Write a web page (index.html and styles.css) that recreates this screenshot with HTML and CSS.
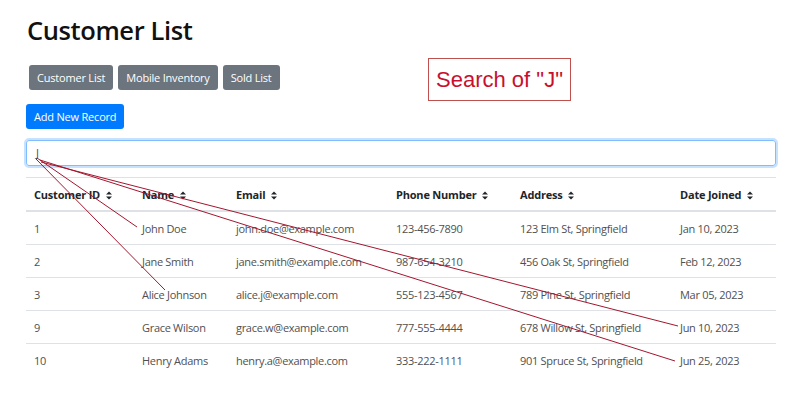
FILE: index.html
```
<!DOCTYPE html>
<html>
<head>
<meta charset="utf-8">
<link rel="stylesheet" href="styles.css">
</head>
<body>
<div class="page">
  <h1 class="title">Customer List</h1>
  <div class="nav">
    <button class="btn btn-gray">Customer List</button>
    <button class="btn btn-gray">Mobile Inventory</button>
    <button class="btn btn-gray">Sold List</button>
  </div>
  <div class="actions">
    <button class="btn btn-blue">Add New Record</button>
  </div>
  <div class="search">J</div>
  <table class="table">
    <thead>
      <tr>
        <th class="c-id">Customer ID <svg class="sort" viewBox="0 0 6 9" width="6" height="9"><path d="M0 3.6L3 0.4L6 3.6Z M0 5.4L3 8.6L6 5.4Z"/></svg></th>
        <th class="c-name">Name <svg class="sort" viewBox="0 0 6 9" width="6" height="9"><path d="M0 3.6L3 0.4L6 3.6Z M0 5.4L3 8.6L6 5.4Z"/></svg></th>
        <th class="c-email">Email <svg class="sort" viewBox="0 0 6 9" width="6" height="9"><path d="M0 3.6L3 0.4L6 3.6Z M0 5.4L3 8.6L6 5.4Z"/></svg></th>
        <th class="c-phone">Phone Number <svg class="sort" viewBox="0 0 6 9" width="6" height="9"><path d="M0 3.6L3 0.4L6 3.6Z M0 5.4L3 8.6L6 5.4Z"/></svg></th>
        <th class="c-addr">Address <svg class="sort" viewBox="0 0 6 9" width="6" height="9"><path d="M0 3.6L3 0.4L6 3.6Z M0 5.4L3 8.6L6 5.4Z"/></svg></th>
        <th class="c-date">Date Joined <svg class="sort" viewBox="0 0 6 9" width="6" height="9"><path d="M0 3.6L3 0.4L6 3.6Z M0 5.4L3 8.6L6 5.4Z"/></svg></th>
      </tr>
    </thead>
    <tbody>
      <tr><td>1</td><td>John Doe</td><td>john.doe@example.com</td><td>123-456-7890</td><td>123 Elm St, Springfield</td><td>Jan 10, 2023</td></tr>
      <tr><td>2</td><td>Jane Smith</td><td>jane.smith@example.com</td><td>987-654-3210</td><td>456 Oak St, Springfield</td><td>Feb 12, 2023</td></tr>
      <tr><td>3</td><td>Alice Johnson</td><td>alice.j@example.com</td><td>555-123-4567</td><td>789 Pine St, Springfield</td><td>Mar 05, 2023</td></tr>
      <tr><td>9</td><td>Grace Wilson</td><td>grace.w@example.com</td><td>777-555-4444</td><td>678 Willow St, Springfield</td><td>Jun 10, 2023</td></tr>
      <tr><td>10</td><td>Henry Adams</td><td>henry.a@example.com</td><td>333-222-1111</td><td>901 Spruce St, Springfield</td><td>Jun 25, 2023</td></tr>
    </tbody>
  </table>
</div>
<div class="note">Search of "J"</div>
<svg class="arrows" width="794" height="397" viewBox="0 0 794 397">
  <g stroke="#a3162e" stroke-width="1" fill="none">
    <line x1="37" y1="158" x2="137" y2="227"/>
    <line x1="36" y1="159" x2="165" y2="290"/>
    <line x1="41" y1="162" x2="678" y2="326"/>
    <line x1="40" y1="160" x2="675" y2="361"/>
  </g>
</svg>
</body>
</html>
```
FILE: styles.css
```
html, body {
  margin: 0;
  padding: 0;
  background: #fff;
}
body {
  font-family: "Open Sans", "Noto Sans", sans-serif;
  color: #212529;
  width: 794px;
  height: 397px;
  overflow: hidden;
  position: relative;
}
.page {
  padding: 14px 18px 0 26px;
}
.title {
  margin: 0 0 0 1px;
  font-size: 25.5px;
  font-weight: 600;
  line-height: 32px;
  letter-spacing: -0.4px;
  color: #111;
}
.nav {
  display: flex;
  gap: 5px;
  margin: 19px 0 0 3px;
}
.btn {
  font-family: inherit;
  border: none;
  border-radius: 3px;
  color: #fff;
  font-size: 11px;
  font-weight: 500;
  letter-spacing: -0.2px;
  height: 25px;
  padding: 0 8px;
  line-height: 25px;
  cursor: pointer;
}
.btn-gray {
  background: #6c757d;
}
.btn-blue {
  background: #007bff;
}
.actions {
  margin-top: 14px;
  display: flex;
}
.search {
  margin-top: 11px;
  height: 24px;
  border: 1px solid #80bdff;
  border-radius: 3px;
  box-shadow: 0 0 0 2px rgba(0, 123, 255, 0.22);
  font-size: 11px;
  line-height: 24px;
  padding-left: 9px;
  color: #495057;
}
.table {
  margin-top: 11px;
  width: 750px;
  border-collapse: collapse;
  font-size: 11px;
  letter-spacing: -0.3px;
  table-layout: fixed;
}
.table th, .table td {
  text-align: left;
  padding: 0 8px;
  border-top: 1px solid #dee2e6;
  white-space: nowrap;
}
.table th {
  height: 32px;
  font-weight: 700;
  letter-spacing: -0.2px;
  border-bottom: 2px solid #dee2e6;
  color: #212529;
}
.table td {
  height: 32px;
  color: #505050;
}
.c-id { width: 92px; }
.c-name { width: 78px; }
.c-email { width: 144px; }
.c-phone { width: 108px; }
.c-addr { width: 144px; }
.c-date { width: auto; }
.sort {
  fill: #212529;
  margin-left: 3px;
  vertical-align: -1px;
}
.note {
  position: absolute;
  left: 428px;
  top: 58px;
  width: 141px;
  height: 41px;
  border: 1px solid #c0504d;
  color: #c8102e;
  font-family: "Liberation Sans", sans-serif;
  font-size: 22px;
  line-height: 41px;
  text-align: center;
}
.arrows {
  position: absolute;
  left: 0;
  top: 0;
  pointer-events: none;
}
```
